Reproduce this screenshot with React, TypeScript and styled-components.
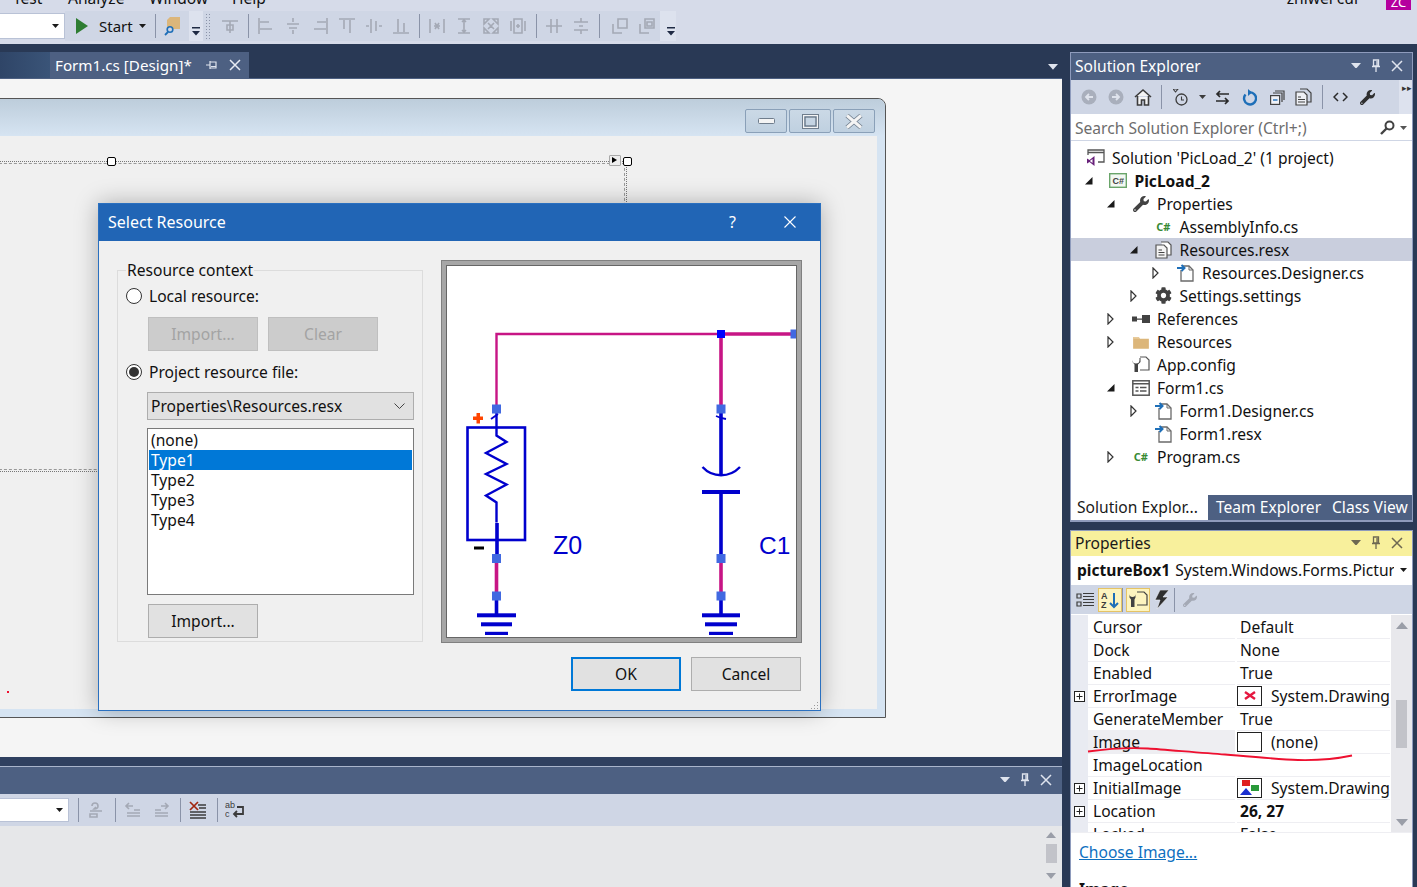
import { FC, ReactNode } from 'react';
import styled, { createGlobalStyle } from 'styled-components';
import { FaWrench, FaCog } from 'react-icons/fa';

const GlobalStyle = createGlobalStyle`
  html, body {
    margin: 0;
    padding: 0;
    background: #293955;
  }
  * {
    box-sizing: border-box;
  }
`;

const Frame = styled.div`
  position: relative;
  width: 1417px;
  height: 887px;
  overflow: hidden;
  background: #293955;
  color: #111;
  font-family: 'Noto Sans', 'Liberation Sans', sans-serif;
  font-size: 15.6px;
`;

const Svg = styled.svg`
  display: block;
  flex: none;
`;

/* ---------- top bar ---------- */

const TopBar = styled.div`
  height: 44px;
  background: #d6dbe9;
`;

const MenuRow = styled.div`
  position: relative;
  height: 11px;
  display: flex;
  align-items: flex-end;
  overflow: hidden;
  padding-left: 13px;
`;

const MenuItem = styled.span<{ $w: number }>`
  width: ${p => p.$w}px;
  line-height: 20px;
  flex: none;
  margin-bottom: 3px;
`;

const UserName = styled.span`
  margin-left: auto;
  line-height: 20px;
  margin-bottom: 3px;
`;

const Avatar = styled.span`
  width: 25px;
  height: 10px;
  margin: 0 6px 0 28px;
  background: #b5009e;
  color: #fff;
  font-size: 13px;
  line-height: 4px;
  text-align: center;
  overflow: hidden;
  align-self: flex-start;
`;

const ToolRow = styled.div`
  height: 30px;
  display: flex;
  align-items: center;
`;

const ComboBox = styled.div<{ $w: number; $h: number; $mr?: number }>`
  width: ${p => p.$w}px;
  height: ${p => p.$h}px;
  flex: none;
  display: flex;
  align-items: center;
  justify-content: flex-end;
  margin-right: ${p => p.$mr ?? 0}px;
  padding-right: 5px;
  background: #fff;
  border: 1px solid #b9c2d6;
  border-left: 0;
`;

const ToolBand = styled.div`
  height: 30px;
  display: flex;
  align-items: center;
  background: #cfd6e5;
`;

const ToolIcon = styled.div<{ $w?: number }>`
  width: ${p => p.$w ?? 27}px;
  height: 24px;
  flex: none;
  display: flex;
  align-items: center;
  justify-content: center;
`;

const ToolSep = styled.div`
  width: 1px;
  height: 24px;
  flex: none;
  margin: 0 3px 0 5px;
  background: #8a93a8;
`;

const BareSep = styled(ToolSep)`
  margin: 0;
`;

const StartSep = styled(ToolSep)`
  margin: 0 0 0 5px;
`;

const StartLabel = styled.span`
  width: 36px;
  flex: none;
  font-size: 15px;
`;

const OverflowCell = styled.div`
  height: 30px;
  flex: none;
  width: 14px;
  display: flex;
  align-items: flex-end;
  justify-content: center;
  padding-bottom: 5px;
  background: #dde2ee;
`;

const TailOverflow = styled(OverflowCell)`
  width: 16px;
  padding-left: 6px;
`;

const Grip = styled.div`
  width: 6px;
  height: 26px;
  margin: 0 6px 0 2px;
  flex: none;
  background-image: radial-gradient(#8a93a8 1px, transparent 1px);
  background-size: 3px 3px;
`;

/* ---------- workspace ---------- */

const Workspace = styled.div`
  display: flex;
  height: 843px;
`;

const LeftColumn = styled.div`
  width: 1062px;
  flex: none;
  display: flex;
  flex-direction: column;
`;

const RightColumn = styled.div`
  flex: 1;
  display: flex;
  flex-direction: column;
  gap: 8px;
  padding: 8px 4px 0 8px;
`;

const DocTabs = styled.div`
  height: 35px;
  flex: none;
  display: flex;
  align-items: flex-end;
  padding-right: 4px;
  border-bottom: 1px solid #4d6082;
`;

const TabStub = styled.div`
  width: 50px;
  height: 26px;
  background: linear-gradient(90deg, #2f4567, #3a5478);
`;

const DocTab = styled.div`
  width: 199px;
  height: 26px;
  display: flex;
  align-items: center;
  padding: 0 0 1px 5px;
  color: #fff;
  background: #4d6082;
  font-size: 15.2px;
  white-space: nowrap;
`;

const TabPin = styled.span`
  margin: 0 11px 0 14px;
  display: flex;
`;

const TabMenu = styled.div`
  margin: 0 0 8px auto;
`;

const Designer = styled.div`
  position: relative;
  height: 678px;
  flex: none;
  background: #f5f5f5;
  overflow: hidden;
`;

const FormWindow = styled.div`
  position: absolute;
  left: -20px;
  top: 19px;
  width: 906px;
  height: 620px;
  display: flex;
  flex-direction: column;
  border: 1px solid #555;
  border-radius: 0 8px 0 0;
  background: #d6e4f2;
  padding: 0 8px 8px 0;
`;

const FormTitle = styled.div`
  height: 37px;
  flex: none;
  display: flex;
  justify-content: flex-end;
  align-items: flex-start;
  gap: 2px;
  padding-top: 10px;
  margin-right: -8px;
  padding-right: 10px;
  border-radius: 0 8px 0 0;
  background: linear-gradient(#bdcddb, #d6e4f2);
`;

const WinButton = styled.div`
  width: 42px;
  height: 24px;
  display: flex;
  align-items: center;
  justify-content: center;
  border: 1px solid #8aa0b8;
  border-radius: 2px;
  background: linear-gradient(#cbd9e6, #bfd0e0);
`;

const FormClient = styled.div`
  position: relative;
  flex: 1;
  background: #f0f0f0;
`;

const Selection = styled.div`
  position: absolute;
  left: -4px;
  top: 25px;
  width: 650px;
  height: 311px;
  border: 1px dotted #777;
  outline: 1px dashed #999;
  outline-offset: -3px;
`;

const Handle = styled.i<{ $x: number }>`
  position: absolute;
  left: ${p => p.$x}px;
  top: -5px;
  width: 9px;
  height: 9px;
  background: #fff;
  border: 1px solid #000;
  border-radius: 2px;
`;

const ActionGlyph = styled.i`
  position: absolute;
  left: 631px;
  top: -7px;
  width: 12px;
  height: 11px;
  background: #eee;
  border: 1px solid #a9a9a9;
  border-radius: 1px;
  &::after {
    content: '';
    position: absolute;
    left: 2px;
    top: 1px;
    border-left: 5px solid #000;
    border-top: 3.5px solid transparent;
    border-bottom: 3.5px solid transparent;
  }
`;

const RedDot = styled.i`
  position: absolute;
  left: 26px;
  top: 555px;
  width: 2px;
  height: 2px;
  background: #f01030;
`;

const DarkGap = styled.div`
  height: 9px;
  flex: none;
  background: #2f4060;
`;

const OutputPanel = styled.div`
  flex: 1;
  display: flex;
  flex-direction: column;
  border-top: 1px solid #a9b5cc;
  background: #e6e7e9;
  min-height: 0;
`;

const PaneHeader = styled.div<{ $yellow?: boolean; $h: number }>`
  height: ${p => p.$h}px;
  flex: none;
  display: flex;
  align-items: center;
  padding: 0 0 2px 4px;
  color: ${p => (p.$yellow ? '#1a1a1a' : '#fff')};
  background: ${p => (p.$yellow ? '#f8f09c' : '#4d6082')};
`;

const PaneControlsBox = styled.div<{ $mr: number }>`
  margin-left: auto;
  margin-right: ${p => p.$mr}px;
  display: flex;
  align-items: center;
  gap: 10px;
`;

const OutputToolbar = styled.div`
  height: 32px;
  flex: none;
  display: flex;
  align-items: center;
  background: #cfd6e5;
`;

const OutputBody = styled.div`
  flex: 1;
  display: flex;
  justify-content: flex-end;
  min-height: 0;
`;

const OutputScroll = styled.div`
  width: 22px;
  display: flex;
  flex-direction: column;
  align-items: center;
  padding-top: 6px;
`;

const OutputThumb = styled.div`
  width: 11px;
  height: 19px;
  margin: 6px 0 10px;
  background: #c2c3c9;
`;

/* ---------- solution explorer ---------- */

const Pane = styled.div<{ $h: number }>`
  height: ${p => p.$h}px;
  flex: none;
  display: flex;
  flex-direction: column;
  border: 1px solid #8e9bbc;
  border-bottom-width: ${p => (p.$h > 400 ? 2 : 0)}px;
  background: #fff;
  overflow: hidden;
`;

const PaneToolbar = styled.div<{ $h: number }>`
  height: ${p => p.$h}px;
  flex: none;
  display: flex;
  align-items: center;
  background: #cfd6e5;
`;

const ToolOverflow = styled.div`
  margin-left: auto;
  width: 13px;
  height: 100%;
  padding: 2px 0 0 3px;
  background: #dde2ee;
  font-size: 9px;
  line-height: 12px;
  color: #333;
`;

const SearchBox = styled.div`
  height: 26px;
  flex: none;
  display: flex;
  align-items: center;
  margin-top: 1px;
  padding: 0 5px 0 4px;
  color: #6d6d6d;
  border-bottom: 1px solid #cfd6e5;
`;

const SearchRight = styled.div`
  margin-left: auto;
  display: flex;
  align-items: center;
  gap: 5px;
`;

const Tree = styled.div`
  flex: 1;
  padding-top: 5px;
  min-height: 0;
`;

const TreeRow = styled.div<{ $level: number; $selected?: boolean; $bold?: boolean }>`
  height: 23px;
  display: flex;
  align-items: center;
  padding-left: ${p => p.$level * 22.5}px;
  font-weight: ${p => (p.$bold ? 700 : 400)};
  background: ${p => (p.$selected ? '#c9cedd' : 'transparent')};
  white-space: nowrap;
`;

const Expander = styled.span`
  width: 16px;
  margin-left: -13.5px;
  flex: none;
  display: flex;
  justify-content: center;
`;

const TreeIcon = styled.span`
  width: 38.5px;
  padding-left: 6px;
  flex: none;
  display: flex;
  justify-content: center;
  color: #424242;
`;

const CsharpGlyph = styled.span`
  color: #388a34;
  font-size: 11px;
  font-weight: 700;
  line-height: 14px;
`;

const PaneTabs = styled.div`
  height: 25px;
  flex: none;
  display: flex;
  align-items: center;
  margin-top: auto;
  background: #4d6082;
  color: #fff;
`;

const ActiveTab = styled.div`
  width: 137px;
  height: 100%;
  display: flex;
  align-items: center;
  padding: 0 0 2px 6px;
  margin-right: 8px;
  color: #1a1a1a;
  background: #fff;
  white-space: nowrap;
`;

const PlainTab = styled.div<{ $w: number }>`
  width: ${p => p.$w}px;
  flex: none;
  margin-bottom: 2px;
  white-space: nowrap;
`;

/* ---------- properties ---------- */

const ObjectRow = styled.div`
  height: 29px;
  flex: none;
  display: flex;
  align-items: center;
  padding: 0 5px 2px 6px;
  white-space: nowrap;
`;

const ObjectName = styled.b`
  margin-right: 5px;
`;

const ObjectType = styled.span`
  width: 219px;
  overflow: hidden;
`;

const ObjectArrow = styled.span`
  margin-left: auto;
`;

const PressedTool = styled(ToolIcon)`
  width: 24px;
  background: #fdf4bf;
  border: 1px solid #e5c365;
`;

const GridArea = styled.div`
  position: relative;
  height: 219px;
  flex: none;
  display: flex;
  padding-top: 1px;
  overflow: hidden;
  border-bottom: 1px solid #eeeef2;
`;

const GridRows = styled.div`
  flex: 1;
  background: linear-gradient(90deg, #e9ebf2 17px, transparent 17px);
`;

const PropRow = styled.div`
  height: 23px;
  display: grid;
  grid-template-columns: 17px 147px 155px;
  column-gap: 0;
`;

const Gutter = styled.div`
  display: flex;
  align-items: center;
  justify-content: center;
  padding-right: 1px;
`;

const NameCell = styled.div<{ $active?: boolean }>`
  display: flex;
  align-items: center;
  padding: 1px 0 0 5px;
  border-bottom: 1px solid #eeeef2;
  background: ${p => (p.$active ? '#eeeef2' : 'transparent')};
  white-space: nowrap;
`;

const ValueCell = styled.div<{ $bold?: boolean }>`
  display: flex;
  align-items: center;
  margin-left: 2px;
  padding: 1px 0 0 3px;
  border-bottom: 1px solid #eeeef2;
  font-weight: ${p => (p.$bold ? 700 : 400)};
  white-space: nowrap;
  overflow: hidden;
`;

const Swatch = styled.span`
  width: 25px;
  height: 20px;
  flex: none;
  margin: -1px 9px 0 -3px;
  display: flex;
  align-items: center;
  justify-content: center;
  background: #fff;
  border: 1px solid #222;
`;

const ScrollBar = styled.div`
  width: 21px;
  flex: none;
  display: flex;
  flex-direction: column;
  align-items: center;
  background: #e8e8ec;
`;

const ScrollArrow = styled.div`
  height: 20px;
  flex: none;
  display: flex;
  align-items: center;
`;

const ScrollTrack = styled.div`
  flex: 1;
`;

const ScrollThumb = styled.div`
  width: 11px;
  height: 48px;
  margin-top: 65px;
  background: #c2c3c9;
`;

const RedStroke = styled.svg`
  position: absolute;
  left: 15px;
  top: 132px;
`;

const Description = styled.div`
  flex: 1;
  min-height: 0;
  overflow: hidden;
  padding: 9px 8px;
`;

const ChooseLink = styled.a`
  color: #0e70c0;
  text-decoration: underline;
  display: block;
  line-height: 21px;
  margin-bottom: 16px;
`;

const DescTitle = styled.b`
  display: block;
  line-height: 21px;
`;

/* ---------- dialog ---------- */

const Dialog = styled.div`
  position: absolute;
  left: 98px;
  top: 203px;
  width: 723px;
  height: 508px;
  display: flex;
  flex-direction: column;
  background: #f0f0f0;
  border: 1px solid #2a70c0;
  box-shadow: 0 0 22px rgba(0, 0, 0, 0.28);
`;

const DialogTitle = styled.div`
  height: 37px;
  flex: none;
  display: flex;
  align-items: center;
  padding: 0 0 1px 9px;
  color: #fff;
  background: #2165b5;
  font-size: 16px;
`;

const HelpMark = styled.span`
  margin-left: auto;
  margin-right: 48px;
`;

const CloseMark = styled.span`
  margin-right: 24px;
`;

const DialogBody = styled.div`
  flex: 1;
  display: flex;
  flex-direction: column;
  padding: 19px 18px 0 18px;
`;

const ContentRow = styled.div`
  display: flex;
  align-items: flex-start;
  gap: 18px;
`;

const ResourceGroup = styled.fieldset`
  width: 306px;
  height: 382px;
  margin: 0;
  padding: 0 0 0 8px;
  border: 1px solid #dcdcdc;
`;

const GroupLegend = styled.legend`
  height: 20px;
  line-height: 20px;
  margin-left: 0;
  padding: 0 1px;
`;

const RadioRow = styled.div<{ $mt: number }>`
  height: 24px;
  margin-top: ${p => p.$mt}px;
  padding-bottom: 1px;
  display: flex;
  align-items: center;
  gap: 7px;
`;

const RadioDot = styled.span<{ $on?: boolean }>`
  width: 16px;
  height: 16px;
  flex: none;
  display: flex;
  align-items: center;
  justify-content: center;
  border-radius: 50%;
  border: 1px solid #333;
  background: #fff;
  &::after {
    content: '';
    width: 10px;
    height: 10px;
    border-radius: 50%;
    background: ${p => (p.$on ? '#333' : 'transparent')};
  }
`;

const ButtonRow = styled.div`
  display: flex;
  gap: 10px;
  margin: 9px 0 0 22px;
`;

const DlgButton = styled.div<{ $disabled?: boolean; $primary?: boolean; $mt?: number; $ml?: number }>`
  width: 110px;
  height: 34px;
  flex: none;
  display: flex;
  align-items: center;
  justify-content: center;
  margin-top: ${p => p.$mt ?? 0}px;
  margin-left: ${p => p.$ml ?? 0}px;
  padding-bottom: ${p => (p.$disabled ? 0 : 1)}px;
  color: ${p => (p.$disabled ? '#a3a3a3' : '#111')};
  background: ${p => (p.$disabled ? '#cccccc' : '#e1e1e1')};
  border: ${p => (p.$primary ? '2px solid #0078d7' : `1px solid ${p.$disabled ? '#bfbfbf' : '#adadad'}`)};
`;

const FileSelect = styled.div`
  width: 267px;
  height: 28px;
  margin: 8px 0 0 21px;
  display: flex;
  align-items: center;
  justify-content: space-between;
  padding: 0 8px 1px 3px;
  background: #e1e1e1;
  border: 1px solid #adadad;
`;

const ResourceList = styled.div`
  width: 267px;
  height: 167px;
  margin: 8px 0 0 21px;
  padding: 1px;
  background: #fff;
  border: 1px solid #7a7a7a;
`;

const ListItem = styled.div<{ $selected?: boolean }>`
  height: 20px;
  line-height: 20px;
  padding-left: 2px;
  color: ${p => (p.$selected ? '#fff' : '#111')};
  background: ${p => (p.$selected ? '#0078d7' : 'transparent')};
`;

const PictureFrame = styled.div`
  width: 361px;
  height: 383px;
  flex: none;
  padding: 4px;
  background: #a6a6a6;
  border: 1px solid #808080;
`;

const PictureInner = styled.div`
  width: 100%;
  height: 100%;
  background: #fff;
  border: 1px solid #666;
  overflow: hidden;
`;

const DialogFooter = styled.div`
  display: flex;
  justify-content: flex-end;
  gap: 10px;
  margin: 14px 1px 0 0;
`;

const ResizeGrip = styled.svg`
  position: absolute;
  right: 1px;
  bottom: 1px;
`;

/* ---------- drawings ---------- */

const ArrowDown: FC<{ color?: string; w?: number }> = ({ color = '#1a1a1a', w = 7 }) => (
  <Svg width={w} height={(w * 4) / 7} viewBox="0 0 7 4">
    <path d="M0 0h7L3.5 4z" fill={color} />
  </Svg>
);

const PaneControls: FC<{ color: string; mr: number }> = ({ color, mr }) => (
  <PaneControlsBox $mr={mr}>
    <ArrowDown color={color} w={10} />
    <Svg width={10} height={13} viewBox="0 0 10 13">
      <path d="M2.5 1h5v6h-5zM1 7.5h8M5 8v5M6 2v4.5" stroke={color} fill="none" strokeWidth={1.3} />
    </Svg>
    <Svg width={12} height={12} viewBox="0 0 12 12">
      <path d="M1 1l10 10M11 1L1 11" stroke={color} strokeWidth={1.5} />
    </Svg>
  </PaneControlsBox>
);

const Overflow: FC = () => (
  <Svg width={8} height={9} viewBox="0 0 8 9">
    <path d="M0 0h8v1.5H0zM0 4h8L4 8.5z" fill="#1f2a44" />
  </Svg>
);

const Gray: FC<{ d: string; size?: number; color?: string }> = ({ d, size = 18, color = '#a4a9b5' }) => (
  <Svg width={size} height={size} viewBox="0 0 18 18">
    <path d={d} stroke={color} strokeWidth={1.6} fill="none" />
  </Svg>
);

const layoutIcons = [
  ['M2 1v16M3 5h9M3 12h12'],
  ['M9 1v4M9 13v4M3 7h12M5 11h8'],
  ['M16 1v16M6 5h9M3 12h12'],
  ['M1 2h16M6 3v9M12 3v13'],
  ['M1 9h3M14 9h3M6 2v14M11 4v10'],
  ['M1 16h16M6 2v13M12 6v9'],
  ['M2 2v14M16 2v14M6 9h6M7 6l4 6M11 6l-4 6'],
  ['M3 2h12M3 16h12M9 2v14M7 5l2-2 2 2M7 13l2 2 2-2'],
  ['M2 2h5L2 7zM16 2h-5l5 5zM2 16h5l-5-5zM16 16h-5l5-5zM6 6l6 6M12 6l-6 6'],
  ['M5 2h8v14H5zM2 4v10M16 4v10M7 9h4M9 7v4'],
  ['M6 2v14M12 2v14M1 9h16'],
  ['M2 5h14M2 13h14M9 1v4M9 13v4M7 9h4'],
  ['M7 2h9v9H7zM2 7v9h9'],
  ['M7 2h9v9H7zM2 7v9h9M9 5h5v4H9z'],
];

const Folder: FC<{ size?: number }> = ({ size = 16 }) => (
  <Svg width={size} height={size} viewBox="0 0 16 16">
    <path d="M1 3.5h5l1 1.5h8v9H1z" fill="#dcb67a" />
    <path d="M1 3.5h5l1 1.5H1z" fill="#e8cb9c" />
  </Svg>
);

const LinkDoc: FC = () => (
  <Svg width={17} height={18} viewBox="0 0 17 18">
    <path d="M6 2h6l4 4v11H4V6" fill="#fff" stroke="#6a6a6a" strokeWidth={1.3} />
    <path d="M12 2v4h4" fill="none" stroke="#6a6a6a" strokeWidth={1} />
    <path d="M0 4h7M4.500 1l3 3-3 3" stroke="#1e6fb8" strokeWidth={2} fill="none" />
  </Svg>
);

const Triangle: FC<{ open?: boolean }> = ({ open }) =>
  open ? (
    <Svg width={9} height={9} viewBox="0 0 9 9">
      <path d="M8.5 1v7.5H1z" fill="#1a1a1a" />
    </Svg>
  ) : (
    <Svg width={7} height={12} viewBox="0 0 7 12">
      <path d="M1 1l5 5-5 5z" fill="#fff" stroke="#333" strokeWidth={1.2} />
    </Svg>
  );

const DocStack: FC = () => (
  <Svg width={17} height={18} viewBox="0 0 17 18">
    <path d="M6 1h7l3 3v10h-4" fill="#fff" stroke="#555" strokeWidth={1.2} />
    <path d="M1 4h8l3 3v10H1z" fill="#f4f4f4" stroke="#555" strokeWidth={1.2} />
    <path d="M3.5 9H7M3.5 11.5h6M3.5 14h6" stroke="#444" strokeWidth={1.1} />
  </Svg>
);

const treeItems: { level: number; label: string; exp?: 'open' | 'closed'; icon: ReactNode; bold?: boolean; selected?: boolean }[] = [
  {
    level: 0,
    label: "Solution 'PicLoad_2' (1 project)",
    icon: (
      <Svg width={18} height={17} viewBox="0 0 18 17">
        <path d="M1 6V1h16v12h-6M1 3.500h16" stroke="#555" strokeWidth={1.3} fill="none" />
        <path d="M0 9.500l2.500 1.500L7.500 7v10l-5-4-2.500 1.500zM2.800 12l2.700 2v-4z" fill="#68217a" />
      </Svg>
    ),
  },
  {
    level: 1,
    label: 'PicLoad_2',
    exp: 'open',
    bold: true,
    icon: (
      <Svg width={18} height={15} viewBox="0 0 18 15">
        <rect x={0.7} y={0.7} width={16.6} height={13.6} fill="#f3f8f3" stroke="#6aa56a" strokeWidth={1.4} />
        <text x={3.5} y={11} fontSize={9} fontWeight={700} fontFamily="Liberation Sans" fill="#424242">C#</text>
      </Svg>
    ),
  },
  { level: 2, label: 'Properties', exp: 'open', icon: <FaWrench size={16} /> },
  { level: 3, label: 'AssemblyInfo.cs', icon: <CsharpGlyph>C#</CsharpGlyph> },
  { level: 3, label: 'Resources.resx', exp: 'open', selected: true, icon: <DocStack /> },
  { level: 4, label: 'Resources.Designer.cs', exp: 'closed', icon: <LinkDoc /> },
  { level: 3, label: 'Settings.settings', exp: 'closed', icon: <FaCog size={17} /> },
  {
    level: 2,
    label: 'References',
    exp: 'closed',
    icon: (
      <Svg width={18} height={10} viewBox="0 0 18 10">
        <path d="M0 2.5h5v5H0zM10 1h8v8h-8zM5 4.5h5v1.2H5z" fill="#424242" />
      </Svg>
    ),
  },
  { level: 2, label: 'Resources', exp: 'closed', icon: <Folder size={18} /> },
  {
    level: 2,
    label: 'App.config',
    icon: (
      <Svg width={18} height={17} viewBox="0 0 18 17">
        <path d="M8 1h6l3 3v10H8" fill="#fff" stroke="#555" strokeWidth={1.2} />
        <path d="M0.500 4a3.500 3.500 0 007 0l0-2 1 0v4L6 8.500V16H2.500V8.500L0.500 6z" fill="#424242" />
      </Svg>
    ),
  },
  {
    level: 2,
    label: 'Form1.cs',
    exp: 'open',
    icon: (
      <Svg width={18} height={16} viewBox="0 0 18 16">
        <rect x={0.8} y={0.8} width={16.4} height={14.4} fill="#fff" stroke="#555" strokeWidth={1.5} />
        <path d="M1 3.8h16M3.5 7.5h3M8 7.5h6.5M3.5 11h3M8 11h6.5" stroke="#555" strokeWidth={1.5} />
      </Svg>
    ),
  },
  { level: 3, label: 'Form1.Designer.cs', exp: 'closed', icon: <LinkDoc /> },
  { level: 3, label: 'Form1.resx', icon: <LinkDoc /> },
  { level: 2, label: 'Program.cs', exp: 'closed', icon: <CsharpGlyph>C#</CsharpGlyph> },
];

type PropItem = {
  name: string;
  value: string;
  swatch?: 'error' | 'blank' | 'init';
  expand?: boolean;
  bold?: boolean;
  active?: boolean;
};

const propItems: PropItem[] = [
  { name: 'Cursor', value: 'Default' },
  { name: 'Dock', value: 'None' },
  { name: 'Enabled', value: 'True' },
  { name: 'ErrorImage', value: 'System.Drawing.', swatch: 'error', expand: true },
  { name: 'GenerateMember', value: 'True' },
  { name: 'Image', value: '(none)', swatch: 'blank', active: true },
  { name: 'ImageLocation', value: '' },
  { name: 'InitialImage', value: 'System.Drawing.', swatch: 'init', expand: true },
  { name: 'Location', value: '26, 27', expand: true, bold: true },
  { name: 'Locked', value: 'False' },
];

const SwatchArt: FC<{ kind: 'error' | 'blank' | 'init' }> = ({ kind }) => {
  if (kind === 'blank') return null;
  if (kind === 'error') {
    return (
      <Svg width={14} height={9} viewBox="0 0 14 9">
        <path d="M2 1l10 7M12 1L2 8" stroke="#e5173f" strokeWidth={2.4} />
      </Svg>
    );
  }
  return (
    <Svg width={21} height={16} viewBox="0 0 21 16">
      <path d="M3 0h8v6H3z" fill="#e02020" />
      <path d="M12 5h8v6h-8z" fill="#2a9a3a" />
      <path d="M1 15l6-7 6 7z" fill="#1a2fd0" />
    </Svg>
  );
};

const PlusBox: FC = () => (
  <Svg width={11} height={11} viewBox="0 0 11 11">
    <rect x={0.5} y={0.5} width={10} height={10} fill="#fff" stroke="#222" />
    <path d="M2.5 5.5h6M5.5 2.5v6" stroke="#222" />
  </Svg>
);

const Circuit: FC = () => {
  const pink = '#c71585';
  const blue = '#0000cd';
  const node = '#4169e1';
  const nodes = [
    [496.5, 409],
    [721, 409],
    [496.5, 558.5],
    [721, 558.5],
    [496.5, 596],
    [721, 596],
    [795, 334],
  ];
  const ground = (x: number, w: number[]) => (
    <g fill={blue}>
      <rect x={x - 1.8} y={596} width={3.6} height={20} />
      <rect x={x - w[0] / 2} y={613.3} width={w[0]} height={4} />
      <rect x={x - w[1] / 2} y={622.3} width={w[1]} height={4} />
      <rect x={x - w[2] / 2} y={631.8} width={w[2]} height={3.2} />
    </g>
  );
  return (
    <Svg width={349} height={371} viewBox="447 266 349 371">
      <path d="M496.5 409V334H721" stroke={pink} strokeWidth={2.4} fill="none" />
      <path d="M721 334V409" stroke={pink} strokeWidth={3.6} />
      <path d="M721 334h74" stroke={pink} strokeWidth={3.6} />
      <path d="M496.5 558v38M721 558v38" stroke={pink} strokeWidth={3.6} />
      <rect x={467.5} y={427.5} width={57.5} height={112.5} fill="none" stroke={blue} strokeWidth={2.6} />
      <path d="M496.5 411v24.5l10 6.5-20.5 11 20.5 11-20.5 10 20.5 10.500-20.500 11 10.500 7v20" stroke={blue} strokeWidth={2.4} fill="none" />
      <path d="M497 523v36M721 410v66M721 492v67" stroke={blue} strokeWidth={3.6} />
      <path d="M491 419l7-5M716 416l5 2 5 1" stroke={blue} strokeWidth={1.8} fill="none" />
      <path d="M702.5 467c10 11 27 11 37.500 0" stroke={blue} strokeWidth={2.4} fill="none" />
      <rect x={702} y={490} width={38} height={4} fill={blue} />
      {ground(496.5, [39, 31, 23])}
      {ground(721, [38, 32, 24])}
      {nodes.map(([x, y]) => (
        <rect key={`${x}-${y}`} x={x - 4.500} y={y - 4.500} width={9} height={9} fill={node} />
      ))}
      <rect x={717} y={330} width={8} height={8} fill="#0000ff" />
      <path d="M473 416.500h10v3.500h-10zM476.500 413h3.500v10.500h-3.500z" fill="#ff4500" />
      <rect x={474} y={546.500} width={10} height={3} fill="#000" />
      <text x={553} y={553.500} fontSize={25} fontFamily="Liberation Sans" fill={blue}>Z0</text>
      <text x={759} y={553.500} fontSize={24.500} fontFamily="Liberation Sans" fill={blue}>C1</text>
    </Svg>
  );
};

const App: FC = () => (
  <Frame>
    <GlobalStyle />

    <TopBar>
      <MenuRow>
        <MenuItem $w={55}>Test</MenuItem>
        <MenuItem $w={81}>Analyze</MenuItem>
        <MenuItem $w={83}>Window</MenuItem>
        <MenuItem $w={50}>Help</MenuItem>
        <UserName>zhiwei cui</UserName>
        <Avatar>ZC</Avatar>
      </MenuRow>
      <ToolRow>
        <ComboBox $w={65} $h={26}>
          <ArrowDown />
        </ComboBox>
        <ToolBand>
          <ToolIcon $w={34}>
            <Svg width={12} height={16} viewBox="0 0 12 16">
              <path d="M0 0l12 8-12 8z" fill="#2e7d32" />
            </Svg>
          </ToolIcon>
          <StartLabel>Start</StartLabel>
          <ToolIcon $w={15}>
            <ArrowDown />
          </ToolIcon>
          <StartSep />
          <ToolIcon $w={33}>
            <Svg width={18} height={20} viewBox="0 0 18 20">
              <path d="M3 4l3-3h10v12H3z" fill="#dcb67a" />
              <circle cx={6} cy={13.500} r={2.800} fill="#cfd6e5" stroke="#1e6fb8" strokeWidth={1.600} />
              <path d="M4 16l-3 3" stroke="#1e6fb8" strokeWidth={1.800} />
            </Svg>
          </ToolIcon>
        </ToolBand>
        <OverflowCell>
          <Overflow />
        </OverflowCell>
        <ToolBand>
          <Grip />
          <ToolIcon $w={26}>
            <Gray d="M1 4h16M9 4v12M6 8h6v5H6z" />
          </ToolIcon>
          <ToolSep />
          {layoutIcons.slice(0, 6).map(([d]) => (
            <ToolIcon key={d}>
              <Gray d={d} />
            </ToolIcon>
          ))}
          <ToolSep />
          {layoutIcons.slice(6, 10).map(([d]) => (
            <ToolIcon key={d}>
              <Gray d={d} />
            </ToolIcon>
          ))}
          <ToolSep />
          {layoutIcons.slice(10, 12).map(([d]) => (
            <ToolIcon key={d}>
              <Gray d={d} />
            </ToolIcon>
          ))}
          <ToolSep />
          <ToolIcon $w={3} />
          {layoutIcons.slice(12).map(([d]) => (
            <ToolIcon key={d}>
              <Gray d={d} />
            </ToolIcon>
          ))}
        </ToolBand>
        <TailOverflow>
          <Overflow />
        </TailOverflow>
      </ToolRow>
    </TopBar>

    <Workspace>
      <LeftColumn>
        <DocTabs>
          <TabStub />
          <DocTab>
            Form1.cs [Design]*
            <TabPin>
              <Svg width={12} height={10} viewBox="0 0 12 10">
                <path d="M0 5h4M4 1v8M4 2h6v6H4M5 6.500h5" stroke="#dfe4ee" strokeWidth={1.2} fill="none" />
              </Svg>
            </TabPin>
            <Svg width={12} height={12} viewBox="0 0 12 12">
              <path d="M1 1l10 10M11 1L1 11" stroke="#e8ecf3" strokeWidth={1.5} />
            </Svg>
          </DocTab>
          <TabMenu>
            <ArrowDown color="#dfe4ee" w={10} />
          </TabMenu>
        </DocTabs>

        <Designer>
          <FormWindow>
            <FormTitle>
              <WinButton>
                <Svg width={17} height={6} viewBox="0 0 17 6">
                  <rect x={0.5} y={0.5} width={16} height={5} rx={1} fill="#f4f4f4" stroke="#6f7d8c" />
                </Svg>
              </WinButton>
              <WinButton>
                <Svg width={17} height={15} viewBox="0 0 17 15">
                  <rect x={1} y={1} width={15} height={13} fill="none" stroke="#f4f4f4" strokeWidth={2} />
                  <rect x={3} y={3} width={11} height={9} fill="none" stroke="#5f6d7c" strokeWidth={1.2} />
                  <rect x={0.5} y={0.5} width={16} height={14} fill="none" stroke="#6f7d8c" />
                </Svg>
              </WinButton>
              <WinButton>
                <Svg width={18} height={15} viewBox="0 0 18 15">
                  <path d="M2 1.500l14 12M16 1.500l-14 12" stroke="#6f7d8c" strokeWidth={4.600} />
                  <path d="M2 1.500l14 12M16 1.500l-14 12" stroke="#f4f4f4" strokeWidth={3} />
                </Svg>
              </WinButton>
            </FormTitle>
            <FormClient>
              <Selection>
                <Handle $x={129} />
                <Handle $x={645} />
                <ActionGlyph />
              </Selection>
              <RedDot />
            </FormClient>
          </FormWindow>
        </Designer>

        <DarkGap />

        <OutputPanel>
          <PaneHeader $h={27}>
            <PaneControls color="#dfe4ee" mr={10} />
          </PaneHeader>
          <OutputToolbar>
            <ComboBox $w={69} $h={24} $mr={4}>
              <ArrowDown />
            </ComboBox>
            <ToolSep />
            <ToolIcon $w={28}>
              <Gray d="M5 5a3 3 0 116 0c0 2-2 3-4 3l2-2M3 10h12M3 13h7v3H3z" />
            </ToolIcon>
            <ToolSep />
            <ToolIcon $w={28}>
              <Gray d="M2 5h7M5 2L2 5l3 3M10 9h6M3 12h13M3 15h13" />
            </ToolIcon>
            <ToolIcon $w={28}>
              <Gray d="M9 5h7M13 2l3 3-3 3M3 9h6M3 12h13M3 15h13" />
            </ToolIcon>
            <ToolSep />
            <ToolIcon $w={28}>
              <Svg width={18} height={18} viewBox="0 0 18 18">
                <path d="M9 4h8M10 7h7M1 11h16M1 14h16M1 17h16" stroke="#3c3c3c" strokeWidth={1.7} />
                <path d="M1 1l8 8M9 1L1 9" stroke="#a1260d" strokeWidth={1.7} />
              </Svg>
            </ToolIcon>
            <ToolSep />
            <ToolIcon $w={28}>
              <Svg width={20} height={18} viewBox="0 0 20 18">
                <text x={0} y={7} fontSize={9} fontFamily="Liberation Sans" fill="#3c3c3c">ab</text>
                <text x={0} y={16} fontSize={9} fontFamily="Liberation Sans" fill="#3c3c3c">c</text>
                <path d="M12 6h6v7h-9M12 10l-3 3 3 3" stroke="#3c3c3c" strokeWidth={1.8} fill="none" />
              </Svg>
            </ToolIcon>
          </OutputToolbar>
          <OutputBody>
            <OutputScroll>
              <Svg width={10} height={6} viewBox="0 0 10 6">
                <path d="M0 6l5-6 5 6z" fill="#9a9ea8" />
              </Svg>
              <OutputThumb />
              <Svg width={10} height={6} viewBox="0 0 10 6">
                <path d="M0 0l5 6 5-6z" fill="#9a9ea8" />
              </Svg>
            </OutputScroll>
          </OutputBody>
        </OutputPanel>
      </LeftColumn>

      <RightColumn>
        <Pane $h={470}>
          <PaneHeader $h={27}>
            Solution Explorer
            <PaneControls color="#dfe4ee" mr={9} />
          </PaneHeader>
          <PaneToolbar $h={34}>
            <ToolIcon $w={36}>
              <Svg width={16} height={16} viewBox="0 0 16 16">
                <circle cx={8} cy={8} r={7.500} fill="#a9afbc" />
                <path d="M12 8H5M8 5L5 8l3 3" stroke="#dfe3ec" strokeWidth={1.8} fill="none" />
              </Svg>
            </ToolIcon>
            <ToolIcon $w={18}>
              <Svg width={16} height={16} viewBox="0 0 16 16">
                <circle cx={8} cy={8} r={7.500} fill="#a9afbc" />
                <path d="M4 8h7M8 5l3 3-3 3" stroke="#dfe3ec" strokeWidth={1.8} fill="none" />
              </Svg>
            </ToolIcon>
            <ToolIcon $w={36}>
              <Svg width={18} height={18} viewBox="0 0 18 18">
                <path d="M1 9l8-7 8 7M3.500 8v9h4v-5h3v5h4V8" stroke="#3c3c3c" strokeWidth={1.600} fill="#f4f4f4" />
              </Svg>
            </ToolIcon>
            <BareSep />
            <ToolIcon $w={37}>
              <Svg width={15} height={17} viewBox="0 0 15 17">
                <circle cx={8.500} cy={10.500} r={5.500} fill="none" stroke="#3c3c3c" strokeWidth={1.300} />
                <path d="M8.500 7.500v3.500H11M0 0h5L2.500 3z" stroke="#3c3c3c" strokeWidth={1.100} fill="none" />
              </Svg>
            </ToolIcon>
            <Svg width={7} height={4} viewBox="0 0 7 4">
              <path d="M0 0h7L3.500 4z" fill="#3c3c3c" />
            </Svg>
            <ToolIcon $w={32}>
              <Svg width={15} height={15} viewBox="0 0 15 15">
                <path d="M14 4H2M5 1L2 4l3 3M1 11h12M10 8l3 3-3 3" stroke="#2a2a2a" strokeWidth={1.700} fill="none" />
              </Svg>
            </ToolIcon>
            <ToolIcon $w={22}>
              <Svg width={16} height={17} viewBox="0 0 16 17">
                <path d="M4.500 5.500a6 6 0 103.500-2" stroke="#1e6fb8" strokeWidth={2.400} fill="none" />
                <path d="M7 0v7l4-3.500z" fill="#1e6fb8" />
              </Svg>
            </ToolIcon>
            <ToolIcon $w={34}>
              <Svg width={15} height={15} viewBox="0 0 15 15">
                <path d="M5 1h9v9M3 3h9v9" stroke="#424242" strokeWidth={1.200} fill="none" />
                <rect x={0.600} y={5.600} width={9} height={8.800} fill="#f0f2f7" stroke="#424242" strokeWidth={1.200} />
                <path d="M3 10h4.500" stroke="#1e6fb8" strokeWidth={1.400} />
              </Svg>
            </ToolIcon>
            <ToolIcon $w={18}>
              <Svg width={18} height={18} viewBox="0 0 18 18">
                <path d="M6 1h7l4 4v9h-4" fill="none" stroke="#424242" strokeWidth={1.200} />
                <path d="M2 4h8l3 3v10H2z" fill="#eef0f5" stroke="#424242" strokeWidth={1.200} />
                <path d="M4 9h3M4 11.500h7M4 14h7" stroke="#424242" strokeWidth={1.100} />
              </Svg>
            </ToolIcon>
            <ToolIcon $w={10} />
            <BareSep />
            <ToolIcon $w={34}>
              <Svg width={15} height={10} viewBox="0 0 15 10">
                <path d="M5 1L1 5l4 4M10 1l4 4-4 4" stroke="#2a2a2a" strokeWidth={1.500} fill="none" />
              </Svg>
            </ToolIcon>
            <ToolIcon $w={20}>
              <FaWrench size={15} color="#2f2f2f" />
            </ToolIcon>
            <ToolOverflow>▸▸</ToolOverflow>
          </PaneToolbar>
          <SearchBox>
            Search Solution Explorer (Ctrl+;)
            <SearchRight>
              <Svg width={15} height={15} viewBox="0 0 15 15">
                <circle cx={9.500} cy={5.500} r={4} fill="none" stroke="#424242" strokeWidth={2} />
                <path d="M6.500 8.500L1 14" stroke="#424242" strokeWidth={2.400} />
              </Svg>
              <ArrowDown color="#555" />
            </SearchRight>
          </SearchBox>
          <Tree>
            {treeItems.map(item => (
              <TreeRow key={item.label} $level={item.level} $selected={item.selected} $bold={item.bold}>
                <Expander>{item.exp && <Triangle open={item.exp === 'open'} />}</Expander>
                <TreeIcon>{item.icon}</TreeIcon>
                {item.label}
              </TreeRow>
            ))}
          </Tree>
          <PaneTabs>
            <ActiveTab>Solution Explor...</ActiveTab>
            <PlainTab $w={116}>Team Explorer</PlainTab>
            <PlainTab $w={80}>Class View</PlainTab>
          </PaneTabs>
        </Pane>

        <Pane $h={357}>
          <PaneHeader $h={25} $yellow>
            Properties
            <PaneControls color="#6d6852" mr={9} />
          </PaneHeader>
          <ObjectRow>
            <ObjectName>pictureBox1</ObjectName>
            <ObjectType>System.Windows.Forms.Pictur</ObjectType>
            <ObjectArrow>
              <ArrowDown />
            </ObjectArrow>
          </ObjectRow>
          <PaneToolbar $h={29}>
            <ToolIcon $w={27}>
              <Svg width={18} height={16} viewBox="0 0 18 16">
                <path d="M1 2h4v4H1zM1 10h4v4H1z" fill="none" stroke="#3c3c3c" strokeWidth={1.200} />
                <path d="M7 1.500h11M7 4.500h11M7 7.500h11M7 10.500h11M7 13.500h11" stroke="#3c3c3c" strokeWidth={1.100} />
              </Svg>
            </ToolIcon>
            <PressedTool>
              <Svg width={19} height={18} viewBox="0 0 19 18">
                <text x={0} y={8} fontSize={9} fontWeight={700} fontFamily="Liberation Sans" fill="#3c3c3c">A</text>
                <text x={0} y={17} fontSize={9} fontWeight={700} fontFamily="Liberation Sans" fill="#3c3c3c">Z</text>
                <path d="M13 2v14M9 12l4 4 4-4" stroke="#1e6fb8" strokeWidth={2} fill="none" />
              </Svg>
            </PressedTool>
            <BareSep />
            <ToolIcon $w={3} />
            <PressedTool>
              <Svg width={19} height={18} viewBox="0 0 19 18">
                <path d="M8 1h7l3 3v10H8" fill="none" stroke="#424242" strokeWidth={1.200} />
                <path d="M0.500 3a3 3 0 006 0v3.500L5.500 8.500V16H2V8.500L0.500 6.500z" fill="#424242" />
              </Svg>
            </PressedTool>
            <ToolIcon $w={24}>
              <Svg width={16} height={19} viewBox="0 0 16 19">
                <path d="M6 0h9L9 7h5L3 19l3-9H1z" fill="#2f2f2f" stroke="#f0f2f7" strokeWidth={0.600} />
              </Svg>
            </ToolIcon>
            <BareSep />
            <ToolIcon $w={30}>
              <FaWrench size={14} color="#a4a9b5" />
            </ToolIcon>
          </PaneToolbar>
          <GridArea>
            <GridRows>
              {propItems.map(item => (
                <PropRow key={item.name}>
                  <Gutter>{item.expand && <PlusBox />}</Gutter>
                  <NameCell $active={item.active}>{item.name}</NameCell>
                  <ValueCell $bold={item.bold}>
                    {item.swatch && (
                      <Swatch>
                        <SwatchArt kind={item.swatch} />
                      </Swatch>
                    )}
                    {item.value}
                  </ValueCell>
                </PropRow>
              ))}
            </GridRows>
            <ScrollBar>
              <ScrollArrow>
                <Svg width={12} height={7} viewBox="0 0 12 7">
                  <path d="M0 7l6-7 6 7z" fill="#9a9ea8" />
                </Svg>
              </ScrollArrow>
              <ScrollTrack>
                <ScrollThumb />
              </ScrollTrack>
              <ScrollArrow>
                <Svg width={12} height={7} viewBox="0 0 12 7">
                  <path d="M0 0l6 7 6-7z" fill="#9a9ea8" />
                </Svg>
              </ScrollArrow>
            </ScrollBar>
            <RedStroke width={285} height={20} viewBox="0 0 285 20">
              <path d="M2 5.500C20 3 45 1.500 62 2.500S115 7 139 8.500s52 5 73 5.500 40-1.500 54-4.500" stroke="#ee1030" strokeWidth={1.900} fill="none" />
            </RedStroke>
          </GridArea>
          <Description>
            <ChooseLink>Choose Image...</ChooseLink>
            <DescTitle>Image</DescTitle>
          </Description>
        </Pane>
      </RightColumn>
    </Workspace>

    <Dialog>
      <DialogTitle>
        Select Resource
        <HelpMark>?</HelpMark>
        <CloseMark>
          <Svg width={12} height={12} viewBox="0 0 12 12">
            <path d="M0.500 0.500l11 11M11.500 0.500l-11 11" stroke="#fff" strokeWidth={1.100} />
          </Svg>
        </CloseMark>
      </DialogTitle>
      <DialogBody>
        <ContentRow>
          <ResourceGroup>
            <GroupLegend>Resource context</GroupLegend>
            <RadioRow $mt={4}>
              <RadioDot />
              Local resource:
            </RadioRow>
            <ButtonRow>
              <DlgButton $disabled>Import...</DlgButton>
              <DlgButton $disabled>Clear</DlgButton>
            </ButtonRow>
            <RadioRow $mt={9}>
              <RadioDot $on />
              Project resource file:
            </RadioRow>
            <FileSelect>
              Properties\Resources.resx
              <Svg width={11} height={6} viewBox="0 0 11 6">
                <path d="M0.500 0.500l5 5 5-5" stroke="#444" fill="none" />
              </Svg>
            </FileSelect>
            <ResourceList>
              <ListItem>(none)</ListItem>
              <ListItem $selected>Type1</ListItem>
              <ListItem>Type2</ListItem>
              <ListItem>Type3</ListItem>
              <ListItem>Type4</ListItem>
            </ResourceList>
            <DlgButton $mt={9} $ml={22}>Import...</DlgButton>
          </ResourceGroup>
          <PictureFrame>
            <PictureInner>
              <Circuit />
            </PictureInner>
          </PictureFrame>
        </ContentRow>
        <DialogFooter>
          <DlgButton $primary>OK</DlgButton>
          <DlgButton>Cancel</DlgButton>
        </DialogFooter>
      </DialogBody>
      <ResizeGrip width={8} height={8} viewBox="0 0 8 8">
        <path d="M6 1h1v1H6zM3 4h1v1H3zM6 4h1v1H6zM0 7h1v1H0zM3 7h1v1H3zM6 7h1v1H6z" fill="#9a9a9a" />
      </ResizeGrip>
    </Dialog>
  </Frame>
);

export default App;
